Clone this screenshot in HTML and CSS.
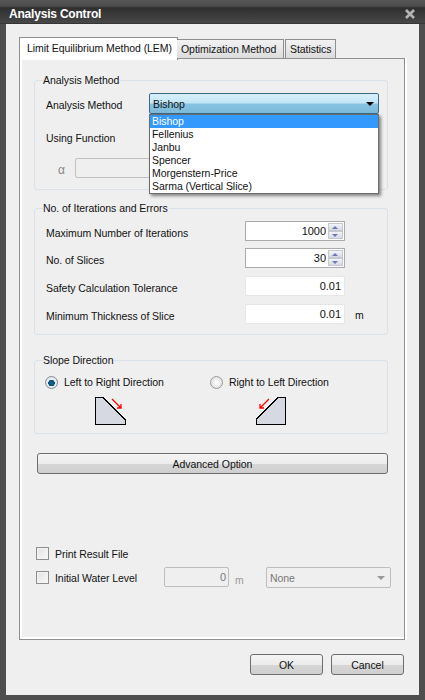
FILE: index.html
```html
<!DOCTYPE html>
<html lang="en">
<head>
  <meta charset="UTF-8" />
  <title>Analysis Control</title>
  <link rel="stylesheet" href="styles.css">
</head>
<body>
  <div class="window">
    <div class="titlebar">
      <span class="title">Analysis Control</span>
      <svg class="close" width="12" height="12" viewBox="0 0 12 12"><path d="M2 2 L10 10 M10 2 L2 10" stroke="#b4b4b4" stroke-width="2.6" fill="none"/></svg>
    </div>

    <div class="dialog">
      <div class="tabs">
        <div class="tab active">Limit Equilibrium Method (LEM)</div>
        <div class="tab tab-opt">Optimization Method</div>
        <div class="tab tab-stat">Statistics</div>
      </div>

      <div class="panel">
        <fieldset class="group group-method">
          <legend>Analysis Method</legend>
          <div class="row method-row">
            <label class="lbl">Analysis Method</label>
            <div class="combo-wrap">
              <div class="combo">
                <span>Bishop</span>
                <i class="arrow"></i>
              </div>
              <ul class="droplist">
                <li class="sel">Bishop</li>
                <li>Fellenius</li>
                <li>Janbu</li>
                <li>Spencer</li>
                <li>Morgenstern-Price</li>
                <li>Sarma (Vertical Slice)</li>
              </ul>
            </div>
          </div>
          <div class="row func-row"><label class="lbl">Using Function</label></div>
          <div class="row alpha-row">
            <span class="alpha">α</span>
            <div class="alpha-input"></div>
          </div>
        </fieldset>

        <fieldset class="group group-iter">
          <legend>No. of Iterations and Errors</legend>
          <div class="row field-row">
            <label class="lbl">Maximum Number of Iterations</label>
            <div class="input spin">
              <span>1000</span>
              <div class="spinner"><b class="up"></b><b class="down"></b></div>
            </div>
          </div>
          <div class="row field-row tight">
            <label class="lbl">No. of Slices</label>
            <div class="input spin">
              <span>30</span>
              <div class="spinner"><b class="up"></b><b class="down"></b></div>
            </div>
          </div>
          <div class="row field-row">
            <label class="lbl">Safety Calculation Tolerance</label>
            <div class="input plain"><span>0.01</span></div>
          </div>
          <div class="row field-row">
            <label class="lbl">Minimum Thickness of Slice</label>
            <div class="input plain"><span>0.01</span></div>
            <span class="unit">m</span>
          </div>
        </fieldset>

        <fieldset class="group group-slope">
          <legend>Slope Direction</legend>
          <div class="slope-cols">
            <div class="slope-col col-left">
              <div class="radio-row"><i class="radio on"></i><span>Left to Right Direction</span></div>
              <svg class="slope-pic" width="32" height="30" viewBox="0 0 32 30">
                <path d="M1.5 1.5 H9 L31 23.5 V28.5 H1.5 Z" fill="#d6d9e2" stroke="#000" stroke-width="1" shape-rendering="crispEdges"/>
                <path d="M18 3 L27 12 M27 8 V12 H23" stroke="#f00" stroke-width="1.3" fill="none"/>
              </svg>
            </div>
            <div class="slope-col col-right">
              <div class="radio-row"><i class="radio"></i><span>Right to Left Direction</span></div>
              <svg class="slope-pic" width="32" height="30" viewBox="0 0 32 30">
                <path d="M30.5 1.5 H23 L1 23.5 V28.5 H30.5 Z" fill="#d6d9e2" stroke="#000" stroke-width="1" shape-rendering="crispEdges"/>
                <path d="M14 3 L5 12 M5 8 V12 H9" stroke="#f00" stroke-width="1.3" fill="none"/>
              </svg>
            </div>
          </div>
        </fieldset>

        <button class="btn btn-wide">Advanced Option</button>

        <div class="bottom-opts">
          <div class="check-row"><i class="check"></i><span>Print Result File</span></div>
          <div class="check-row">
            <i class="check"></i><span class="check-lbl">Initial Water Level</span>
            <div class="input disabled"><span>0</span></div>
            <span class="unit dim">m</span>
            <div class="combo-off"><span>None</span><i class="arrow dim-arrow"></i></div>
          </div>
        </div>
      </div>

      <div class="footer">
        <button class="btn btn-foot">OK</button>
        <button class="btn btn-foot">Cancel</button>
      </div>
    </div>
  </div>
</body>
</html>
```

FILE: styles.css
```css
* {
  box-sizing: border-box;
}

html, body {
  margin: 0;
  height: 700px;
  overflow: hidden;
}

body {
  font-family: "Liberation Sans", Arial, sans-serif;
  font-size: 10.5px;
  letter-spacing: -0.05px;
  color: #111;
}

.window {
  width: 425px;
  height: 700px;
  background: #4e4e4e;
  display: flex;
  flex-direction: column;
  padding: 0 6px 5px;
}

.titlebar {
  height: 24px;
  margin: 0 -6px;
  padding: 0 9px 0 9px;
  display: flex;
  align-items: center;
  justify-content: space-between;
  background: linear-gradient(#565656 0, #4c4c4c 6px, #2f2f2f 8px, #474747 23px, #222 24px);
}

.title {
  color: #fff;
  font-weight: bold;
  font-size: 12px;
  letter-spacing: -0.2px;
  padding-top: 3px;
}

.close {
  margin-top: 3px;
}

.dialog {
  flex: 1;
  background: #efefef;
  padding: 14px 13px 0;
  display: flex;
  flex-direction: column;
}

.tabs {
  display: flex;
  align-items: flex-end;
  height: 21px;
  position: relative;
  z-index: 1;
}

.tab {
  height: 19px;
  padding: 3px 0 0 4px;
  background: linear-gradient(#f2f2f2, #dcdcdc);
  border: 1px solid #8f8f8f;
  border-bottom: 0;
  margin-bottom: 1px;
  white-space: nowrap;
}

.tab.active {
  width: 159px;
  height: 23px;
  padding: 4px 0 0 7px;
  background: #fff;
  margin: 0 0 -1px;
}

.tab-opt {
  width: 107px;
  margin-left: -1px;
  border-left: 0;
}

.tab-stat {
  width: 51px;
  margin-left: 1px;
}

.panel {
  width: 386px;
  height: 582px;
  border: 1px solid #8f8f8f;
  box-shadow: inset 2px 0 #fff, inset 0 -2px #fff, 2px 0 #fff;
  background: #efefef;
  padding: 15px 16px 0 14px;
  display: flex;
  flex-direction: column;
  margin-top: -1px;
}

.group {
  margin: 0;
  padding: 0;
  border: 1px solid #d9e2ea;
  border-radius: 3px;
  min-width: 0;
}

.group legend {
  margin-left: 8px;
  padding: 0 1px 0 0;
  line-height: 13px;
}

.row {
  display: flex;
  align-items: center;
}

.lbl {
  display: block;
}

.group-method {
  height: 116px;
}

.method-row {
  padding: 6px 0 0 11px;
  height: 27px;
}

.method-row .lbl {
  width: 103px;
  padding-top: 2px;
}

.combo-wrap {
  position: relative;
  width: 230px;
}

.combo {
  height: 21px;
  border: 1px solid #3a6a86;
  border-radius: 2px;
  background: linear-gradient(#d8f0fb 0, #c4e6f6 45%, #86c3e2 55%, #7db9d8 100%);
  display: flex;
  align-items: center;
  justify-content: space-between;
  padding: 0 4px 0 3px;
}

.arrow {
  width: 0;
  height: 0;
  border-left: 4px solid transparent;
  border-right: 4px solid transparent;
  border-top: 4px solid #000;
}

.droplist {
  position: absolute;
  left: 0;
  top: 21px;
  width: 230px;
  margin: 0;
  padding: 0;
  list-style: none;
  background: #fff;
  border: 1px solid #6d6d6d;
  box-shadow: 2px 2px 3px rgba(0, 0, 0, 0.45);
  z-index: 5;
}

.droplist li {
  height: 13px;
  line-height: 13px;
  padding-left: 2px;
}

.droplist li.sel {
  background: #3399ff;
  color: #fff;
}

.func-row {
  padding: 15px 0 0 11px;
  height: 33px;
}

.alpha-row {
  padding: 9px 0 0 23px;
  height: 32px;
}

.alpha {
  color: #888;
  width: 17px;
  font-size: 12px;
  padding-top: 5px;
}

.alpha-input {
  width: 120px;
  height: 20px;
  border: 1px solid #c0c0c0;
  border-radius: 2px;
  background: #efefef;
}

.group-iter {
  margin-top: 12px;
  height: 133px;
}

.field-row {
  padding-left: 11px;
  height: 28px;
}

.group-iter .field-row:first-of-type {
  margin-top: 2px;
}

.field-row.tight {
  margin-top: -1px;
}

.field-row .lbl {
  width: 199px;
  padding-top: 3px;
}

.input {
  width: 100px;
  height: 20px;
  background: #fff;
  display: flex;
  align-items: center;
  justify-content: flex-end;
  border-radius: 2px;
  font-size: 11px;
}

.input.spin {
  border: 1px solid #ababab;
  border-radius: 0;
  padding-right: 1px;
}

.input.plain {
  border: 1px solid #e6e6e6;
  padding-right: 3px;
}

.spinner {
  width: 15px;
  height: 16px;
  margin-left: 2px;
  display: flex;
  flex-direction: column;
}

.spinner b {
  flex: 1;
  background: linear-gradient(#f4f4f8, #d5d8e4);
  border: 1px solid #c6c8d0;
  position: relative;
}

.spinner b::after {
  content: "";
  position: absolute;
  left: 3px;
  top: 2px;
  border-left: 3px solid transparent;
  border-right: 3px solid transparent;
}

.spinner .up::after {
  border-bottom: 3px solid #6d78b4;
}

.spinner .down::after {
  border-top: 3px solid #6d78b4;
}

.unit {
  margin-left: 10px;
  padding-top: 2px;
}

.group-slope {
  margin-top: 19px;
  height: 80px;
}

.slope-cols {
  display: flex;
}

.slope-col {
  display: flex;
  flex-direction: column;
}

.col-left {
  padding-left: 10px;
  width: 175px;
}

.radio-row {
  display: flex;
  align-items: center;
  gap: 6px;
  height: 20px;
  margin-top: 5px;
}

.radio {
  width: 13px;
  height: 13px;
  border-radius: 50%;
  border: 1px solid #9a9a9a;
  background: radial-gradient(circle, #fff 0, #d6d6d6 100%);
}

.radio.on {
  background: radial-gradient(circle at 50% 55%, #0f6f9f 0, #0a4a70 38%, #e8eef2 42%, #dfe4e8 100%);
  border-color: #7f8a92;
}

.slope-pic {
  display: block;
  margin-top: 4px;
}

.col-left .slope-pic {
  margin-left: 49px;
}

.col-right .slope-pic {
  margin-left: 45px;
}

.btn {
  font: inherit;
  letter-spacing: inherit;
  color: #111;
  border: 1px solid #6e6e6e;
  border-radius: 3px;
  background: linear-gradient(#f4f4f4 0, #ececec 50%, #d6d6d6 55%, #cfcfcf 100%);
  padding: 0;
}

.btn-wide {
  width: 351px;
  height: 21px;
  margin: 19px 0 0 3px;
}

.bottom-opts {
  margin-top: 73px;
  padding-left: 2px;
  display: flex;
  flex-direction: column;
  gap: 11px;
}

.check-row {
  display: flex;
  align-items: center;
  height: 13px;
}

.check-row > * {
  flex-shrink: 0;
}

.check {
  width: 13px;
  height: 13px;
  border: 1px solid #8e8f8f;
  background: linear-gradient(135deg, #e4e4e4, #f8f8f8);
  box-shadow: inset 0 0 0 1px #f4f4f4;
  margin-right: 6px;
}

.check-lbl {
  width: 109px;
}

.input.disabled {
  width: 65px;
  height: 20px;
  margin-top: -1px;
  border: 1px solid #bdbdbd;
  background: #efefef;
  color: #777;
  padding-right: 2px;
}

.unit.dim {
  color: #999;
  margin-left: 6px;
  padding-top: 4px;
  width: 31px;
}

.combo-off {
  width: 125px;
  height: 21px;
  border: 1px solid #bdbdbd;
  border-radius: 2px;
  color: #777;
  display: flex;
  align-items: center;
  justify-content: space-between;
  padding: 0 5px 0 3px;
}

.dim-arrow {
  border-top-color: #999;
}

.footer {
  display: flex;
  justify-content: flex-end;
  gap: 8px;
  padding: 14px 2px 0 0;
}

.btn-foot {
  width: 73px;
  height: 21px;
}
```
